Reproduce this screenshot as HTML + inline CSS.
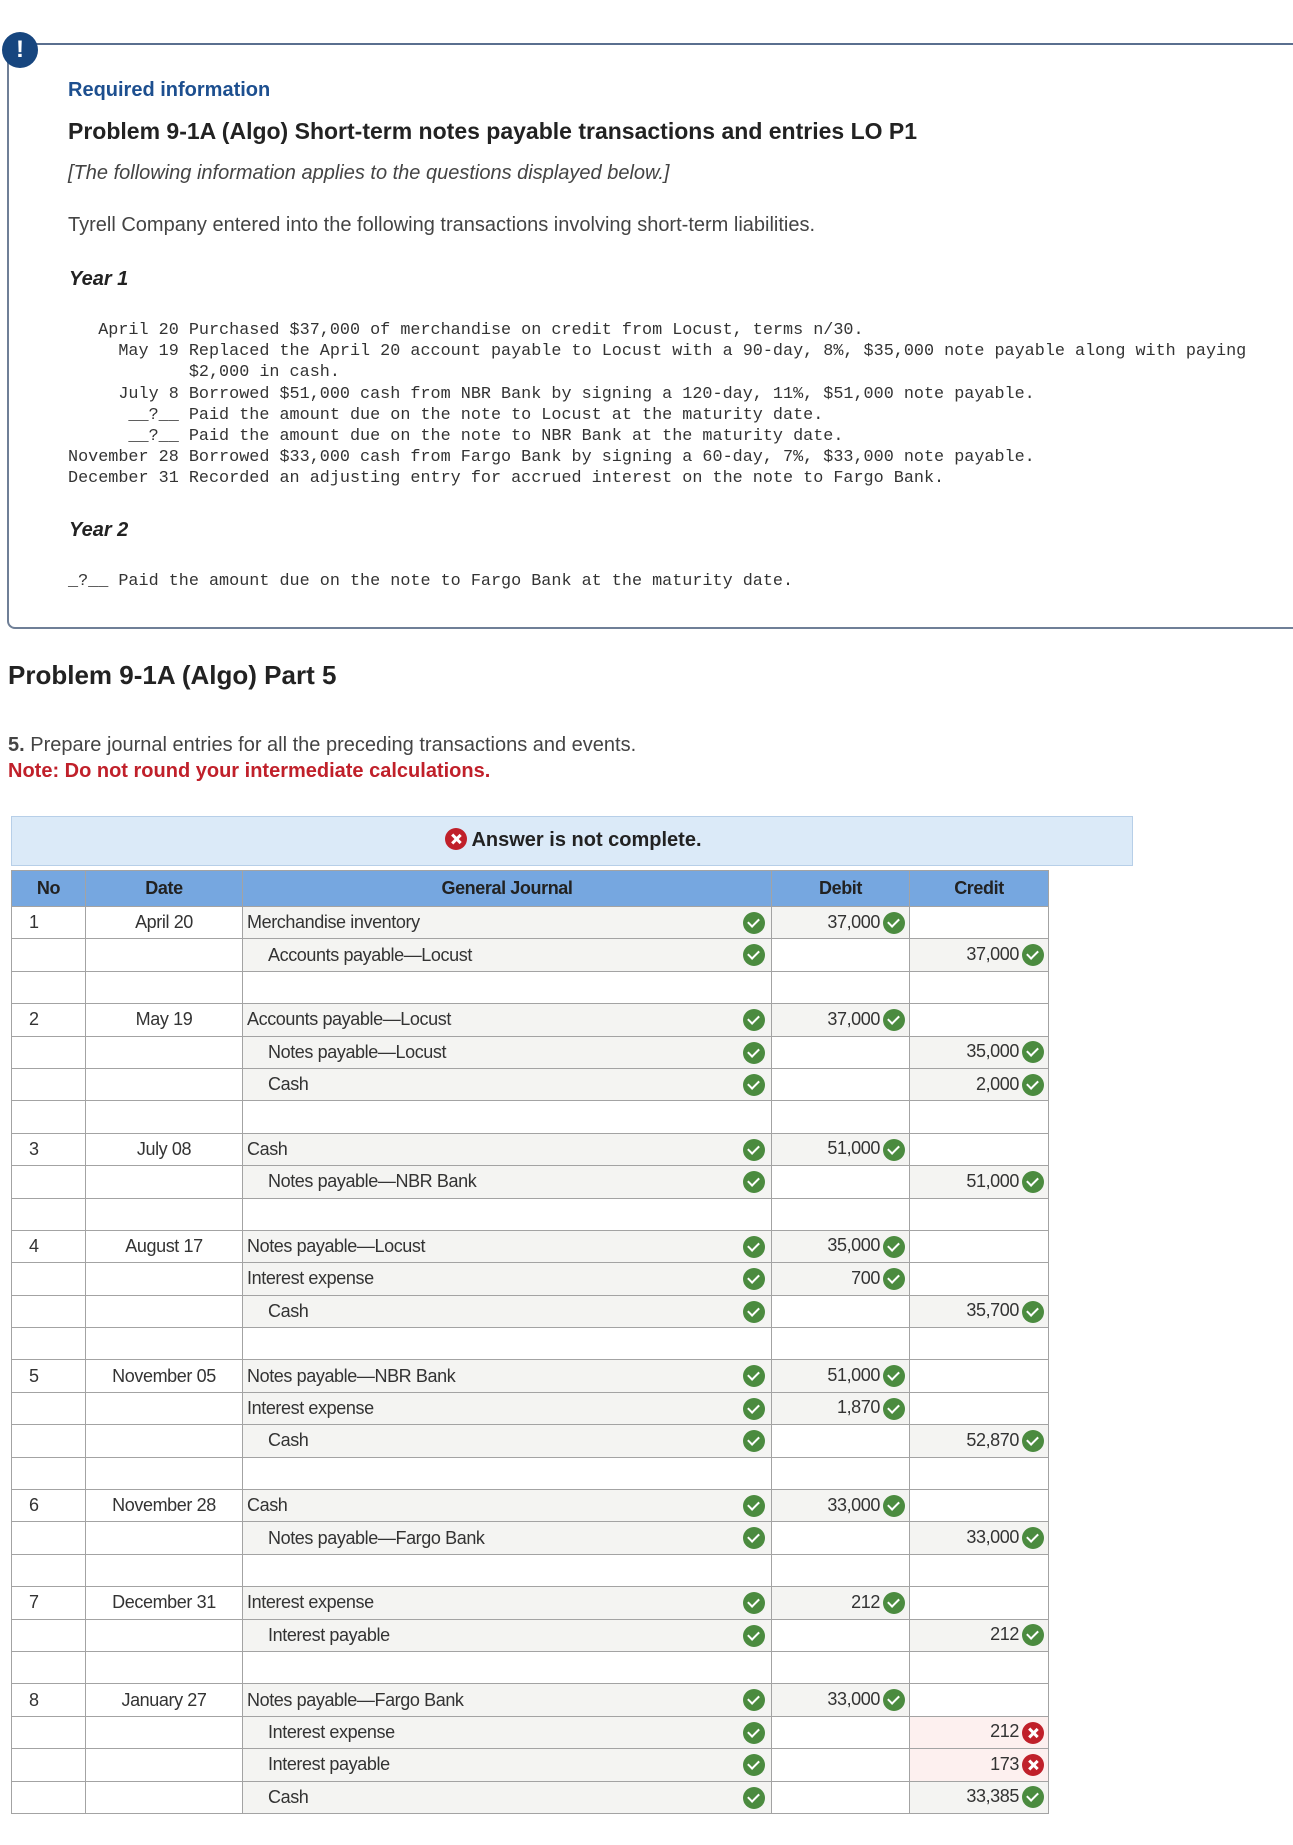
<!DOCTYPE html>
<html><head><meta charset="utf-8"><style>
body{margin:0;width:1293px;height:1845px;background:#fff;font-family:"Liberation Sans",Arial,sans-serif;color:#222;position:relative;overflow:hidden}
.abs{position:absolute;white-space:nowrap}
.box{position:absolute;left:7px;top:43px;width:1300px;height:586px;border-left:2px solid #6f7f97;border-bottom:2px solid #6f7f97;border-top:2px solid #5a6f8f;border-bottom-left-radius:8px;box-sizing:border-box}
.icon{position:absolute;left:2px;top:32px;width:36px;height:36px;border-radius:50%;background:#17467f;color:#fff;font-weight:bold;font-size:24px;text-align:center;line-height:36px}
.mono{font-family:"Liberation Mono",monospace;font-size:16.8px;color:#333}
table{position:absolute;left:11px;top:870px;border-collapse:collapse;table-layout:fixed}
td,th{border:1.5px solid #a3a3a3;height:32.4px;padding:0 4px;box-sizing:border-box;font-size:18px;color:#333;white-space:nowrap;letter-spacing:-0.4px}
td:first-child{padding-left:17px}
th{background:#76a7e0;height:36px;font-weight:bold;color:#222}
th:first-child{padding-left:4px}
.c{text-align:center}.r{text-align:right;padding-right:4px}
.f{background:#f4f4f2}.e{background:#fdf0ef}
.ind{padding-left:25px}
.j{position:relative}
.j .ok{position:absolute;right:6px;top:5px}
.ok,.x{display:inline-block;width:22px;height:22px;border-radius:50%;vertical-align:middle;margin-left:3px;background-repeat:no-repeat;position:relative}
.ok{background:#4b8b3f}.x{background:#c0202a}
.ok::after{content:"";position:absolute;left:7px;top:4px;width:5px;height:9px;border:solid #fff;border-width:0 2.5px 2.5px 0;transform:rotate(45deg)}
.x::before,.x::after{content:"";position:absolute;left:10px;top:5px;width:2.5px;height:12px;background:#fff;transform:rotate(45deg)}
.x::after{transform:rotate(-45deg)}
</style></head><body>
<div class="box"></div>
<div class="icon">!</div>
<div class="abs" style="left:68px;top:79px;font-size:20px;font-weight:bold;color:#1d4f8f">Required information</div>
<div class="abs" style="left:68px;top:118px;font-size:23px;font-weight:bold;color:#222">Problem 9-1A (Algo) Short-term notes payable transactions and entries LO P1</div>
<div class="abs" style="left:68px;top:162px;font-size:20px;font-style:italic;color:#444">[The following information applies to the questions displayed below.]</div>
<div class="abs" style="left:68px;top:214px;font-size:20px;color:#444">Tyrell Company entered into the following transactions involving short-term liabilities.</div>
<div class="abs" style="left:69px;top:268px;font-size:20px;font-style:italic;font-weight:bold;color:#222">Year 1</div>
<div class="abs mono" style="left:68px;top:320px;line-height:21.2px"><pre style="margin:0;font:inherit">   April 20 Purchased $37,000 of merchandise on credit from Locust, terms n/30.
     May 19 Replaced the April 20 account payable to Locust with a 90-day, 8%, $35,000 note payable along with paying
            $2,000 in cash.
     July 8 Borrowed $51,000 cash from NBR Bank by signing a 120-day, 11%, $51,000 note payable.
      __?__ Paid the amount due on the note to Locust at the maturity date.
      __?__ Paid the amount due on the note to NBR Bank at the maturity date.
November 28 Borrowed $33,000 cash from Fargo Bank by signing a 60-day, 7%, $33,000 note payable.
December 31 Recorded an adjusting entry for accrued interest on the note to Fargo Bank.</pre></div>
<div class="abs" style="left:69px;top:519px;font-size:20px;font-style:italic;font-weight:bold;color:#222">Year 2</div>
<div class="abs mono" style="left:68px;top:572px">_?__ Paid the amount due on the note to Fargo Bank at the maturity date.</div>
<div class="abs" style="left:8px;top:660px;font-size:26px;font-weight:bold;color:#222">Problem 9-1A (Algo) Part 5</div>
<div class="abs" style="left:8px;top:734px;font-size:20px;color:#444"><b>5.</b> Prepare journal entries for all the preceding transactions and events.</div>
<div class="abs" style="left:8px;top:760px;font-size:20px;font-weight:bold;color:#c0202a">Note: Do not round your intermediate calculations.</div>
<div class="abs" style="left:11px;top:816px;width:1122px;height:50px;background:#dbeaf8;border:1.5px solid #b7cfe8;box-sizing:border-box;text-align:center;line-height:47px;font-size:20px;font-weight:bold;color:#222"><span class="x" style="margin-right:4px;top:-2px"></span>Answer is not complete.</div>
<table>
<colgroup><col style="width:74px"><col style="width:157px"><col style="width:529px"><col style="width:138px"><col style="width:139px"></colgroup>
<tr><th>No</th><th>Date</th><th>General Journal</th><th>Debit</th><th>Credit</th></tr>
<tr><td>1</td><td class="c">April 20</td><td class="f j">Merchandise inventory<span class="ok"></span></td><td class="r f">37,000<span class="ok"></span></td><td></td></tr>
<tr><td></td><td></td><td class="f j ind">Accounts payable—Locust<span class="ok"></span></td><td></td><td class="r f">37,000<span class="ok"></span></td></tr>
<tr><td></td><td></td><td></td><td></td><td></td></tr>
<tr><td>2</td><td class="c">May 19</td><td class="f j">Accounts payable—Locust<span class="ok"></span></td><td class="r f">37,000<span class="ok"></span></td><td></td></tr>
<tr><td></td><td></td><td class="f j ind">Notes payable—Locust<span class="ok"></span></td><td></td><td class="r f">35,000<span class="ok"></span></td></tr>
<tr><td></td><td></td><td class="f j ind">Cash<span class="ok"></span></td><td></td><td class="r f">2,000<span class="ok"></span></td></tr>
<tr><td></td><td></td><td></td><td></td><td></td></tr>
<tr><td>3</td><td class="c">July 08</td><td class="f j">Cash<span class="ok"></span></td><td class="r f">51,000<span class="ok"></span></td><td></td></tr>
<tr><td></td><td></td><td class="f j ind">Notes payable—NBR Bank<span class="ok"></span></td><td></td><td class="r f">51,000<span class="ok"></span></td></tr>
<tr><td></td><td></td><td></td><td></td><td></td></tr>
<tr><td>4</td><td class="c">August 17</td><td class="f j">Notes payable—Locust<span class="ok"></span></td><td class="r f">35,000<span class="ok"></span></td><td></td></tr>
<tr><td></td><td></td><td class="f j">Interest expense<span class="ok"></span></td><td class="r f">700<span class="ok"></span></td><td></td></tr>
<tr><td></td><td></td><td class="f j ind">Cash<span class="ok"></span></td><td></td><td class="r f">35,700<span class="ok"></span></td></tr>
<tr><td></td><td></td><td></td><td></td><td></td></tr>
<tr><td>5</td><td class="c">November 05</td><td class="f j">Notes payable—NBR Bank<span class="ok"></span></td><td class="r f">51,000<span class="ok"></span></td><td></td></tr>
<tr><td></td><td></td><td class="f j">Interest expense<span class="ok"></span></td><td class="r f">1,870<span class="ok"></span></td><td></td></tr>
<tr><td></td><td></td><td class="f j ind">Cash<span class="ok"></span></td><td></td><td class="r f">52,870<span class="ok"></span></td></tr>
<tr><td></td><td></td><td></td><td></td><td></td></tr>
<tr><td>6</td><td class="c">November 28</td><td class="f j">Cash<span class="ok"></span></td><td class="r f">33,000<span class="ok"></span></td><td></td></tr>
<tr><td></td><td></td><td class="f j ind">Notes payable—Fargo Bank<span class="ok"></span></td><td></td><td class="r f">33,000<span class="ok"></span></td></tr>
<tr><td></td><td></td><td></td><td></td><td></td></tr>
<tr><td>7</td><td class="c">December 31</td><td class="f j">Interest expense<span class="ok"></span></td><td class="r f">212<span class="ok"></span></td><td></td></tr>
<tr><td></td><td></td><td class="f j ind">Interest payable<span class="ok"></span></td><td></td><td class="r f">212<span class="ok"></span></td></tr>
<tr><td></td><td></td><td></td><td></td><td></td></tr>
<tr><td>8</td><td class="c">January 27</td><td class="f j">Notes payable—Fargo Bank<span class="ok"></span></td><td class="r f">33,000<span class="ok"></span></td><td></td></tr>
<tr><td></td><td></td><td class="f j ind">Interest expense<span class="ok"></span></td><td></td><td class="r e">212<span class="x"></span></td></tr>
<tr><td></td><td></td><td class="f j ind">Interest payable<span class="ok"></span></td><td></td><td class="r e">173<span class="x"></span></td></tr>
<tr><td></td><td></td><td class="f j ind">Cash<span class="ok"></span></td><td></td><td class="r f">33,385<span class="ok"></span></td></tr>
</table>
</body></html>
